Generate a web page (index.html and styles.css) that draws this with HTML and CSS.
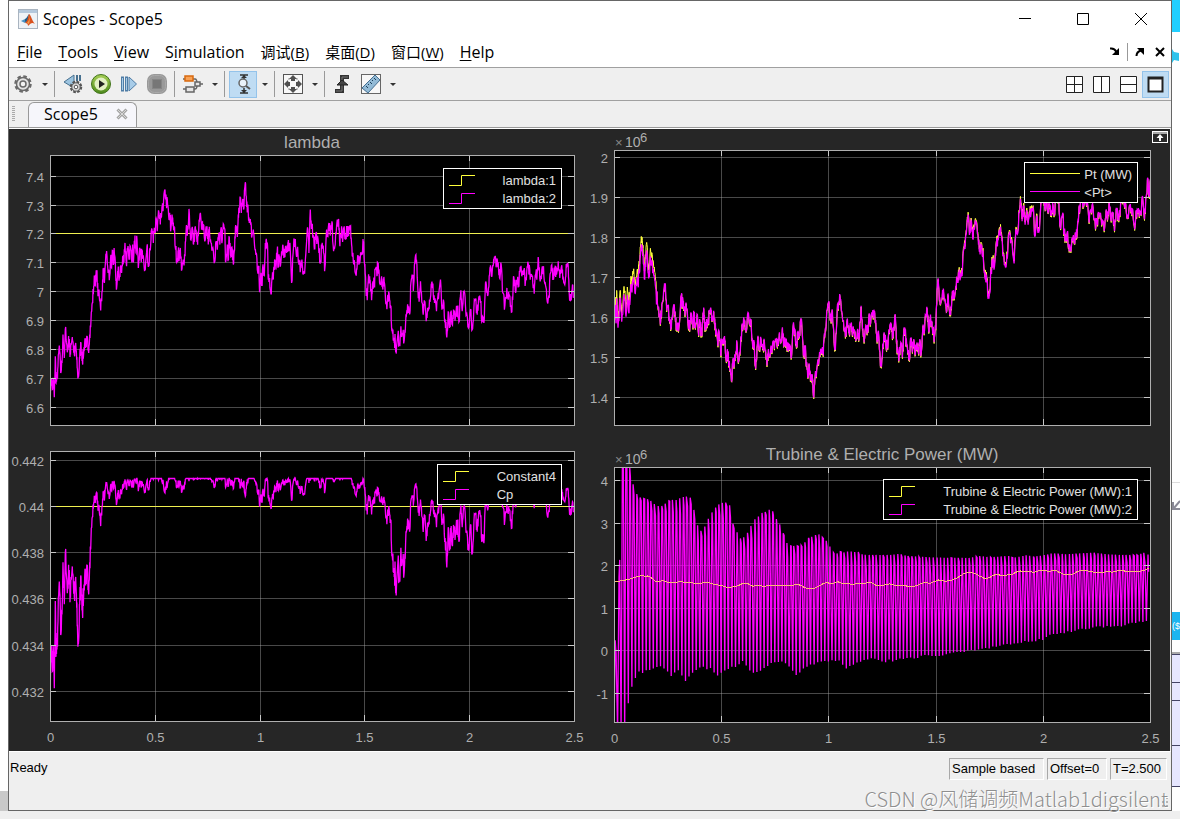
FILE: index.html
```html
<!DOCTYPE html>
<html lang="zh-CN">
<head>
	<meta charset="UTF-8">
	<title>Scopes - Scope5</title>
	<link rel="stylesheet" href="styles.css">
</head>
<body>
	<div class="desktop">
		<div class="behind_left"></div>
		<div class="window">
			<div class="titlebar">
				<svg class="logo" width="20" height="20" viewBox="0 0 20 20">
					<rect x="0.5" y="0.5" width="19" height="19" fill="#eef2f6" stroke="#a9b4c0"/>
					<rect x="1" y="1" width="18" height="3" fill="#b4c8dc"/>
					<path d="M3 12l4-2 2 2-2 2z" fill="#4a93c4"/>
					<path d="M7 10c2-1 3-4 4-5l-1 6-2 3-1-2z" fill="#225a86"/>
					<path d="M11 5c2 1 3 7 6 10-3-2-4-1-7 2 0-2-1-3-3-3 3-2 3-7 4-9z" fill="#d9521f"/>
					<path d="M11 6c1 3 0 6-2 8l2 1c1-3 1-6 0-9z" fill="#f3a04a"/>
				</svg>
				<h1>Scopes - Scope5</h1>
				<div class="win_btns">
					<button aria-label="Minimize"><svg width="12" height="12" viewBox="0 0 12 12"><path d="M0 5.5h12"/></svg></button>
					<button aria-label="Maximize"><svg width="12" height="12" viewBox="0 0 12 12"><path d="M.5 .5h11v11h-11z"/></svg></button>
					<button aria-label="Close"><svg width="12" height="12" viewBox="0 0 12 12"><path d="M0 0l12 12M12 0L0 12"/></svg></button>
				</div>
			</div>
			<div class="menubar">
				<button><u>F</u>ile</button>
				<button><u>T</u>ools</button>
				<button><u>V</u>iew</button>
				<button>S<u>i</u>mulation</button>
				<button class="zh">调试(<u>B</u>)</button>
				<button class="zh">桌面(<u>D</u>)</button>
				<button class="zh">窗口(<u>W</u>)</button>
				<button><u>H</u>elp</button>
				<div class="dock">
					<button aria-label="Dock"><svg width="10" height="10" viewBox="0 0 10 10"><path d="M0 1.5c3-.5 5 .5 6.500 3.500" fill="none" stroke="#000" stroke-width="2"/><path d="M9 1v7H2z"/></svg></button>
					<span class="dock_line"></span>
					<button aria-label="Undock"><svg width="10" height="10" viewBox="0 0 10 10"><path d="M1.500 9c0-3 1-4.500 4.500-5.500" fill="none" stroke="#000" stroke-width="2"/><path d="M2 1h7v7z"/></svg></button>
					<button aria-label="Close document"><svg width="10" height="10" viewBox="0 0 10 10"><path d="M1 1l8 8M9 1L1 9" stroke="#000" stroke-width="2"/></svg></button>
				</div>
			</div>
			<div class="toolbar">
				<button class="tool" aria-label="Configuration">
					<svg width="20" height="20" viewBox="0 0 20 20"><circle cx="10" cy="10" r="7.500" fill="none" stroke="#6a6a6a" stroke-width="2.500" stroke-dasharray="3.500 2.400"/><circle cx="10" cy="10" r="6.500" fill="#e4e4e4" stroke="#6a6a6a" stroke-width="1.500"/><circle cx="10" cy="10" r="3" fill="#f4f4f4" stroke="#6a6a6a" stroke-width="1.500"/></svg>
				</button>
				<button class="arrow" aria-label="More configuration"></button>
				<span class="sep"></span>
				<button class="tool" aria-label="Step back">
					<svg width="20" height="20" viewBox="0 0 20 20"><path d="M1 8l10-7v13z" fill="#9cc4e0" stroke="#47708f"/><path d="M14 1v6M17 1v6" stroke="#47708f" stroke-width="2"/><circle cx="13" cy="13" r="5" fill="none" stroke="#555" stroke-width="2.500" stroke-dasharray="2.600 1.300"/><circle cx="13" cy="13" r="4.200" fill="#ddd" stroke="#555"/><circle cx="13" cy="13" r="1.800" fill="#fff" stroke="#555"/></svg>
				</button>
				<button class="tool" aria-label="Run">
					<svg width="22" height="22" viewBox="0 0 22 22"><defs><linearGradient id="run" x2="0" y2="1"><stop stop-color="#a7cf55"/><stop offset="1" stop-color="#4d8a1c"/></linearGradient></defs><circle cx="11" cy="11" r="9.500" fill="url(#run)" stroke="#41741b"/><circle cx="11" cy="11" r="6.500" fill="#e3f0c4"/><path d="M9 7l6 4-6 4z" fill="#222"/></svg>
				</button>
				<button class="tool" aria-label="Step forward">
					<svg width="18" height="18" viewBox="0 0 18 18"><rect x="1.500" y="2" width="2" height="14" fill="#a8cce8" stroke="#4f7da6"/><rect x="5.500" y="2" width="2" height="14" fill="#a8cce8" stroke="#4f7da6"/><path d="M9 2l7.500 7L9 16z" fill="#a8cce8" stroke="#4f7da6"/></svg>
				</button>
				<button class="tool" aria-label="Stop">
					<svg width="20" height="20" viewBox="0 0 20 20"><rect width="20" height="20" rx="7" fill="#999"/><rect x="1.500" y="1.500" width="17" height="17" rx="6" fill="none" stroke="#a9a9a9"/><rect x="5.500" y="5.500" width="9" height="9" fill="#777" stroke="#868686"/></svg>
				</button>
				<span class="sep"></span>
				<button class="tool" aria-label="Highlight block">
					<svg width="22" height="20" viewBox="0 0 22 20"><path d="M1 5h3M11 5h2q2 0 2 5M1 15h3M11 15h2q2 0 2-4M17 10h4" fill="none" stroke="#666" stroke-width="1.500"/><rect x="3" y="2" width="8" height="5" fill="#f9a255" stroke="#d8690f" stroke-width="1.500"/><rect x="4" y="13" width="8" height="5" fill="#e6e6e6" stroke="#666" stroke-width="1.500"/><rect x="13" y="8" width="5" height="4" fill="#e6e6e6" stroke="#666" stroke-width="1.500"/></svg>
				</button>
				<button class="arrow" aria-label="More highlight"></button>
				<span class="sep"></span>
				<button class="tool active" aria-label="Zoom Y">
					<svg width="20" height="20" viewBox="0 0 20 20"><path d="M7 1h8M7 19h8M11 1v5M11 14v5" stroke="#333" stroke-width="1.500"/><path d="M8 4l3-3 3 3zM8 16l3 3 3-3z" fill="#333"/><circle cx="10" cy="9" r="4" fill="#e9f2fa" stroke="#666" stroke-width="1.500"/><path d="M13 12l4 3" stroke="#555" stroke-width="2"/></svg>
				</button>
				<button class="arrow" aria-label="More zoom"></button>
				<span class="sep"></span>
				<button class="tool" aria-label="Scale axes">
					<svg width="20" height="20" viewBox="0 0 20 20"><rect x=".5" y=".5" width="19" height="19" fill="#f8f8f8" stroke="#555"/><rect x="5" y="5" width="10" height="10" fill="none" stroke="#999" stroke-dasharray="2 2"/><path d="M10 1l4 4h-2v2H8V5H6zM10 19l4-4h-2v-2H8v2H6zM1 10l4-4v2h2v4H5v2zM19 10l-4-4v2h-2v4h2v2z" fill="#505050"/></svg>
				</button>
				<button class="arrow" aria-label="More scaling"></button>
				<span class="sep"></span>
				<button class="tool" aria-label="Triggers">
					<svg width="20" height="20" viewBox="0 0 20 20"><path d="M2 17h7V3h7" fill="none" stroke="#333" stroke-width="4"/><path d="M3 17h6V3h6" fill="none" stroke="#777"/><path d="M4 11l5-5 6 5z" fill="#444" stroke="#222"/></svg>
				</button>
				<button class="tool" aria-label="Cursor measurements">
					<svg width="20" height="20" viewBox="0 0 20 20"><rect x=".5" y=".5" width="19" height="19" fill="#f7f7f7" stroke="#666"/><path d="M1 14L14 1l5 5L7 19z" fill="#92bad6" stroke="#456f91"/><path d="M5 12l2 2M7 10l1 1M9 8l2 2M11 6l1 1M13 4l2 2" stroke="#1d425e"/></svg>
				</button>
				<button class="arrow" aria-label="More measurements"></button>
				<div class="layouts">
					<button class="tool" aria-label="Grid layout"><svg width="17" height="17" viewBox="0 0 17 17"><path d="M.5 .5h16v16H.5zM8.500 0v17M0 8.500h17"/></svg></button>
					<button class="tool" aria-label="Two columns"><svg width="17" height="17" viewBox="0 0 17 17"><path d="M.5 .5h16v16H.5zM8.500 0v17"/></svg></button>
					<button class="tool" aria-label="Two rows"><svg width="17" height="17" viewBox="0 0 17 17"><path d="M.5 .5h16v16H.5zM0 8.500h17"/></svg></button>
					<button class="tool active" aria-label="Single"><svg width="17" height="17" viewBox="0 0 17 17"><path d="M1.500 1.500h14v14h-14zM1 2.500h15"/></svg></button>
				</div>
			</div>
			<div class="tabs">
				<span class="grip"></span>
				<div class="tab">
					<span>Scope5</span>
					<button aria-label="Close tab"><svg width="12" height="12" viewBox="0 0 12 12"><path d="M1.500 1.500l9 9M10.500 1.500l-9 9" stroke="#a3a3a3" stroke-width="3"/><path d="M2 2l8 8M10 2l-8 8" stroke="#d6d6d6"/></svg></button>
				</div>
			</div>
			<div class="scope">
				<button class="expand" aria-label="Expand toolbar"><svg width="16" height="12" viewBox="0 0 16 12"><rect x=".5" y=".5" width="15" height="11" fill="#2a2a2a" stroke="#fff"/><path d="M1 2h14" stroke="#aaa" stroke-width="2"/><path d="M4.500 7L8 3l3.500 4H9v3H7V7z" fill="#fff"/></svg></button>
				<div class="column column_left">
					<h2>lambda</h2>
					<div class="plot">
						<svg id="lambda"></svg>
						<ul class="legend">
							<li><svg class="key yellow"><path d="M0 13.500h12.500v-10H26"/></svg>lambda:1</li>
							<li><svg class="key magenta"><path d="M0 13.500h12.500v-10H26"/></svg>lambda:2</li>
						</ul>
					</div>
					<h2></h2>
					<div class="plot">
						<svg id="cp"></svg>
						<ul class="legend">
							<li><svg class="key yellow"><path d="M0 13.500h12.500v-10H26"/></svg>Constant4</li>
							<li><svg class="key magenta"><path d="M0 13.500h12.500v-10H26"/></svg>Cp</li>
						</ul>
					</div>
				</div>
				<div class="column column_right">
					<h2></h2>
					<div class="plot">
						<svg id="pt"></svg>
						<ul class="legend">
							<li><svg class="key yellow"><path d="M0 7.500h50"/></svg>Pt (MW)</li>
							<li><svg class="key magenta"><path d="M0 7.500h50"/></svg>&lt;Pt&gt;</li>
						</ul>
					</div>
					<h2>Trubine &amp; Electric Power (MW)</h2>
					<div class="plot">
						<svg id="power"></svg>
						<ul class="legend">
							<li><svg class="key yellow"><path d="M0 13.500h12.500v-10H26"/></svg>Trubine &amp; Electric Power (MW):1</li>
							<li><svg class="key magenta"><path d="M0 13.500h12.500v-10H26"/></svg>Trubine &amp; Electric Power (MW):2</li>
						</ul>
					</div>
				</div>
			</div>
			<div class="status">
				<span class="ready">Ready</span>
				<span class="field field_mode">Sample based</span>
				<span class="field field_offset">Offset=0</span>
				<span class="field field_time">T=2.500</span>
			</div>
			<svg class="resize" width="12" height="12" viewBox="0 0 12 12"><path d="M9 1h2v2H9zM5 5h2v2H5zM9 5h2v2H9zM1 9h2v2H1zM5 9h2v2H5zM9 9h2v2H9z" fill="#b5b5b5"/></svg>
		</div>
		<div class="behind_right">
			<div class="cyan_top"></div>
			<svg class="cyan_bit" width="8" height="16" viewBox="0 0 8 16"><path d="M0 0l2 3 5 1v8l-5-1-2 3z" fill="#2fc3ec"/></svg>
			<svg class="arrow_bit" width="8" height="30" viewBox="0 0 8 30"><path d="M0 .5h8" stroke="#ddd"/><path d="M8 19l-6 7M1 20v7h7" fill="none" stroke="#8a8a96" stroke-width="2"/></svg>
			<div class="cyan_tag">($</div>
			<div class="rows"><i></i><i></i><i></i><i></i></div>
		</div>
	</div>
	<div class="watermark">CSDN @风储调频Matlab1digsilent</div>
	<script src="scope.js"></script>
</body>
</html>
```

FILE: styles.css
```css
body,h1,h2,ul,li{margin:0;padding:0}
ul{list-style-type: none;}
*{
	box-sizing: border-box;
}
body{
	position: relative;
	height: 100vh;
	padding-bottom: 8px;
	overflow: hidden;
	background-color: #efefef;
	color: #000;
	font-family: "Liberation Sans", Arial, "Noto Sans CJK SC", sans-serif;
	font-size: 13px;
}
button{
	display: flex;
	align-items: center;
	justify-content: center;
	margin: 0;
	padding: 0;
	border: 0;
	background: none;
	color: inherit;
	font: inherit;
}
svg{
	display: block;
	flex: none;
}

.desktop{
	display: flex;
	height: 100%;
}
.behind_left{
	width: 8px;
	background: linear-gradient(#fff, #fff) no-repeat 0 0 / 100% calc(100% - 20px) #c9c9c9;
}
.window{
	position: relative;
	flex: 1;
	min-width: 0;
	display: flex;
	flex-direction: column;
	border: 1px solid #666;
	background-color: #efefef;
}

/* title and menu */
.titlebar{
	display: flex;
	align-items: center;
	height: 36px;
	padding: 0 1px 0 9px;
	background-color: #fff;
}
.titlebar h1{
	margin-left: 5px;
	font: 16px/20px "Open Sans", "Noto Sans CJK SC", sans-serif;
}
.win_btns{
	display: flex;
	margin-left: auto;
}
.win_btns button{
	width: 58px;
	height: 36px;
}
.win_btns svg{
	fill: none;
	stroke: #000;
}
.menubar{
	display: flex;
	align-items: center;
	gap: 16px;
	height: 31px;
	padding: 0 6px 1px 8px;
	border-bottom: 1px solid #a0a0a0;
	background-color: #fff;
	font: 16px/20px "Open Sans", "Noto Sans CJK SC", sans-serif;
}
.menubar .zh{
	font-size: 15px;
}
.menubar u{
	text-underline-offset: 2px;
}
.dock{
	display: flex;
	align-items: center;
	gap: 7px;
	margin-left: auto;
}
.dock_line{
	width: 1px;
	height: 18px;
	background-color: #999;
}
.dock button:last-child{
	margin-left: 3px;
}

/* toolbar */
.toolbar{
	display: flex;
	align-items: center;
	height: 33px;
	border-bottom: 1px solid #a0a0a0;
}
.tool{
	width: 28px;
	height: 27px;
}
.arrow{
	width: 14px;
	height: 27px;
}
.arrow::after{
	content: "";
	margin-left: 2px;
	border: 3px solid transparent;
	border-top-color: #333;
	border-bottom: 0;
}
.sep{
	width: 1px;
	height: 26px;
	margin: 0 4px 0 3px;
	background-color: #999;
}
.active{
	border: 1px solid #94c3ea;
	background-color: #bfdcf3;
}
.layouts{
	display: flex;
	margin: 0 2px 0 auto;
}
.layouts .tool{
	width: 27px;
}
.layouts svg{
	fill: #fff;
	stroke: #222;
	stroke-width: 1;
}
.layouts .active svg{
	stroke-width: 2;
}

/* document tab */
.tabs{
	display: flex;
	align-items: flex-end;
	height: 27px;
	border-bottom: 1px solid #999;
}
.grip{
	width: 3px;
	height: 16px;
	margin: 0 12px 5px 3px;
	background: repeating-linear-gradient(#aaa 0 1px, #efefef 1px 2px);
}
.tab{
	display: flex;
	align-items: center;
	justify-content: space-between;
	width: 109px;
	height: 25px;
	margin: 0 0 0 1px;
	padding: 0 8px 2px 15px;
	border: 1px solid #999;
	border-bottom: 0;
	border-radius: 6px 6px 0 0;
	background-color: #f6f6fb;
	font: 16px/20px "Open Sans", sans-serif;
}

/* scope canvas */
.scope{
	position: relative;
	flex: 1;
	min-height: 0;
	display: grid;
	grid-template-columns: 524fr 536fr;
	column-gap: 40px;
	margin-right: 1px;
	padding: 0 20px 0 41px;
	background-color: #262626;
	border-top: 1px solid #fff;
}
.expand{
	position: absolute;
	top: 2px;
	right: 2px;
}
.column{
	display: flex;
	flex-direction: column;
	min-width: 0;
	min-height: 0;
	padding-bottom: 29px;
}
.column_left{
	padding-bottom: 31px;
}
.column h2{
	height: 26px;
	padding-top: 2px;
	color: #afafaf;
	font-size: 17px;
	font-weight: normal;
	line-height: 24px;
	text-align: center;
}
.column_right h2{
	height: 42px;
	padding-top: 18px;
}
.column_right h2:first-child{
	height: 21px;
}
.plot{
	position: relative;
	flex: 270 1 0;
	min-height: 0;
}
.column_right .plot{
	flex-grow: 275;
}
.column_right .plot:last-child{
	flex-grow: 255;
}
.plot > svg{
	position: absolute;
	width: 100%;
	height: 100%;
	overflow: visible;
}
.face{
	fill: #000;
}
.box{
	fill: none;
	stroke: #afafaf;
}
.grid{
	fill: none;
	stroke: rgba(175,175,175,0.42);
}
.ticks{
	fill: none;
	stroke: #c8c8c8;
}
.plot text{
	fill: #afafaf;
	font-size: 13px;
}
.plot .times{
	fill: #888;
}
.plot .power_of{
	font-size: 14px;
}
.line{
	fill: none;
	stroke-width: 1;
}
.yellow{
	stroke: #ffff3c;
}
.magenta{
	stroke: #ff00ff;
}
.constant{
	stroke: #f0f050;
}
.mean{
	stroke: #ffb478;
}
.line.magenta{
	stroke-width: 1.3;
}
.legend{
	position: absolute;
	top: 12px;
	right: 12px;
	padding: 3px 5px 0 5px;
	border: 1px solid #fff;
	background-color: #000;
	color: #e0e0e0;
	line-height: 18px;
}
.column_left .legend{
	top: 13px;
}
.legend li{
	display: flex;
	gap: 4px;
	white-space: nowrap;
}
.key{
	width: 50px;
	height: 18px;
	fill: none;
}

/* status bar */
.status{
	display: flex;
	gap: 3px;
	height: 59px;
	padding: 6px 4px 0 1px;
	border-top: 1px solid #fff;
	line-height: 20px;
}
.ready{
	margin-right: auto;
}
.field{
	height: 22px;
	padding: 0 2px;
	border: 1px solid #a8a8a8;
	border-right-color: #fff;
	border-bottom-color: #fff;
	white-space: nowrap;
}
.field_mode{
	width: 95px;
}
.field_offset{
	width: 60px;
}
.field_time{
	width: 57px;
}
.resize{
	position: absolute;
	right: 2px;
	bottom: 2px;
}

/* what shows behind the window on the right */
.behind_right{
	display: flex;
	flex-direction: column;
	width: 8px;
	overflow: hidden;
	background-color: #fff;
}
.cyan_top{
	height: 32px;
	background-color: #22cfff;
}
.cyan_bit{
	margin-top: 17px;
}
.arrow_bit{
	margin-top: auto;
}
.cyan_tag{
	height: 28px;
	margin: 100px 0 12px;
	background-color: #1cb5f0;
	color: #fff;
	font-size: 9px;
	line-height: 28px;
}
.rows{
	display: grid;
	grid-template-rows: 29px 18px 45px 41px;
	margin-bottom: 24px;
	border-top: 2px solid #aaa;
	background-color: #e6e6ff;
}
.rows i{
	border-bottom: 1px solid #444466;
}
.rows i:first-child{
	border-top: 1px solid #444466;
}
.watermark{
	position: absolute;
	right: 12px;
	bottom: 6px;
	color: #8f8f8f;
	font: 300 20px/28px "Noto Sans CJK SC", sans-serif;
	text-shadow: 1px 1px 0 #fff;
	white-space: nowrap;
}
```

FILE: scope.js
```js
var lambdaRaw = join([
	151,800,155,745,158,780,161,748,164,803,167,680,169,760,172,750,175,710,179,648,183,730,187,700,190,615,194,685,198,592,203,668,206,640,209,628,211,682,214,640,218,622,221,650,225,680,228,640,231,690,234,735,237,737,240,685,244,640,248,692,252,670,256,626,260,652,262,630,266,660,270,615,274,570,278,520,282,470,286,440,288,458,291,422,295,500,298,480,302,526,306,515,309,450,312,418,315,447,320,376,324,408,329,452,333,385,336,415,338,362,342,403,344,368,348,430,351,476,355,425,359,445,363,410,366,430,370,380,372,397,376,340,380,402,384,360,388,390,392,350,396,390,399,345,402,388,406,318,409,370,412,330,416,415,420,355,424,390,428,362,432,388,437,420,442,350,446,412,450,360,454,330,457,300,461,340,464,295,467,310,469,265,473,305,478,250,482,285,487,230,490,245,496,180,500,217,504,225,508,270,512,262,513,305,517,255,520,290,524,300,528,360,532,390,536,365,539,388,542,355,547,418,552,395,556,380,560,292,563,318,568,238,573,330,578,292,582,345,587,290,592,337,596,320,601,254,606,300,611,285,617,330,622,290,626,345,629,292,634,340,640,355,645,390,649,335,653,360,657,312,661,345,664,298,668,330,671,283,676,300,678,398,683,345,686,385,689,322,694,382,698,360,702,402,706,320,709,290,713,322,716,255,719,250,722,206,725,250,729,210,732,240,737,158,741,232,745,225,749,280,753,285,757,320,761,300,765,350,770,370,774,425,777,410,780,488,784,430,787,465,789,415,794,438,797,340,800,328,804,350,806,450,810,445,814,493,818,440,821,450,825,390,829,420,833,360,836,410,839,385,843,405,849,350,853,385,857,355,861,370,865,340,868,365,871,340,876,460,882,350,886,338,890,375,894,352,898,405
], 870, [
	33,412,37,390,41,425,45,432,50,350,55,300,58,370,62,240,67,290,72,320,75,355,78,312,83,325,88,370,93,392,98,340,102,370,106,415,111,300,115,320,118,280,122,318,127,275,132,365,137,345,142,280,147,268,151,350,156,290,160,325,164,290,168,330,172,295,177,320,182,290,186,345,190,370,195,400,200,438,204,380,208,405,213,370,218,375,221,335,225,405,229,480,233,512,236,455,240,440,243,485,247,492,250,455,254,465,258,415,262,440,264,398,268,420,272,465,276,440,280,480,283,442,287,490,291,525,295,500,300,512,304,530,306,595,310,600,314,640,317,630,320,672,325,615,330,645,334,590,338,610,344,632,348,580,353,548,357,530,361,550,364,460,369,445,372,468,377,385,381,395,385,480,390,500,393,455,398,520,402,540,405,520,410,575,415,545,420,510,425,465,430,462,435,520,441,545,445,500,449,480,453,450,457,540,463,520,468,595,473,605,476,545,480,595,484,550,488,585,492,540,498,560,504,535,508,577,514,482,518,545,523,490,528,530,533,560,537,595,543,540,548,600,553,535,558,510,563,555,568,500,573,520,578,575,583,580,588,460,593,485,598,470,602,420,606,440,611,410,616,382,621,405,626,398,630,445,635,405,640,490,646,528,652,475,656,510,661,500,667,547,672,440,677,480,682,460,687,465,692,412,697,440,703,425,708,455,713,410,717,402,722,450,726,435,730,460,734,492,738,440,743,430,747,392,752,455,757,420,762,410,767,460,772,505,778,500,783,430,788,425,792,450,796,420,801,435,806,395,811,445,816,410,820,450,826,465,830,405,835,400,839,490,844,512,849,465,852,505
]);
var ptRaw = join([
	43,560,46,500,49,555,51,480,55,568,61,480,66,550,73,468,79,535,83,470,88,525,93,450,97,462,102,415,107,465,112,425,115,440,118,395,120,400,123,340,127,320,131,375,135,422,139,350,143,350,147,420,151,370,156,366,160,390,164,410,168,450,173,520,178,560,183,575,188,520,193,480,196,462,201,545,205,530,210,580,214,597,218,560,223,525,227,575,232,605,238,590,244,500,248,520,251,515,255,545,259,520,263,555,270,605,275,555,279,585,283,560,287,598,292,555,296,610,300,570,304,622,309,580,312,535,316,605,321,570,325,585,329,550,333,535,337,575,342,545,346,600,350,605,354,643,358,605,363,675,367,632,372,645,375,635,379,690,383,660,387,712,391,720,395,755,399,710,404,700,408,680,412,645,417,695,422,660,426,600,431,580,435,572,440,605,445,550,450,580,454,570,459,655,463,635,467,710,471,690,475,620,479,660,484,630,489,660,494,638,498,665,502,710,506,660,512,675,518,650,524,660,528,630,533,655,539,610,543,640,548,595,553,650,557,630,562,665,567,645,571,650,575,685,580,590,585,600,590,655,594,610,598,625,603,580,606,580,611,680,616,655,620,710,624,745,629,715,632,755,637,735,641,800,646,740,651,720,655,690,661,680,666,665,670,670,672,640,676,610,680,570,685,520,690,550,694,580,698,545,703,640,707,662,712,550,717,520,721,505,725,545,730,575,735,600,739,620,743,570,748,610,754,590,758,620,763,600,768,635,773,605,777,635,784,530,788,600,793,640,797,600,802,615,807,570,813,580,818,560,823,545,827,580,832,640,836,605,842,712,848,680,853,610,858,640,863,650,868,600
], 840, [
	33,580,36,605,40,625,46,555,50,640,54,665,58,680,63,640,68,685,72,610,76,608,81,650,87,692,91,660,94,625,98,670,102,630,107,675,112,640,116,670,120,630,124,675,129,600,133,615,138,560,142,540,147,610,151,570,156,575,160,600,164,625,168,600,172,480,176,462,181,525,186,510,191,478,196,510,201,545,205,495,210,558,215,540,218,485,223,510,228,470,233,450,237,425,242,435,247,430,252,350,257,320,260,300,265,245,270,300,275,265,280,320,285,280,290,270,296,330,301,365,306,340,311,380,316,440,320,425,325,498,330,480,334,410,339,385,344,400,349,335,354,315,359,290,365,305,369,370,375,395,380,390,385,330,390,300,395,320,403,392,408,290,414,300,418,240,423,210,427,265,431,220,436,275,440,235,445,275,450,245,455,225,460,225,465,310,470,250,476,290,480,270,485,210,490,180,495,235,500,205,505,250,510,225,515,260,520,230,525,255,530,190,537,210,541,290,548,255,553,310,558,330,562,310,567,345,572,360,577,325,582,335,588,320,592,310,597,245,602,215,607,200,612,230,617,210,623,220,628,280,634,240,640,235,647,300,652,270,657,265,662,250,667,280,673,305,679,240,684,265,688,215,693,265,698,255,704,305,711,240,717,275,724,215,730,200,736,225,743,260,748,230,755,235,760,265,766,285,772,240,777,245,783,255,788,200,794,270,799,200,804,145,808,195,811,150
]);
// envelope of the electric power swing
var topRaw = join([
	43,590,50,610,58,400,60,230,66,60,86,60,93,98,103,145,115,170,130,175,145,178,158,185,170,198,190,198,200,188,213,178,225,182,240,175,255,170,268,170,278,178,287,240,298,268,307,275,320,250,330,225,342,210,352,195,363,192,375,185,385,192,395,200,400,250,405,263,415,285,425,300,437,287,450,270,460,240,472,235,482,220,500,215,513,205,523,222,535,252,545,255,555,300,567,318,600,318,612,312,622,295,633,292,643,288,653,282,663,285,675,300,685,306,695,335,710,342,717,333,730,338,750,333,762,338,772,333,782,342,800,345,870,345
], 840, [60,342,80,348,120,350,170,353,270,354,298,348,330,352,385,348,400,354,440,346,465,350,490,346,520,340,560,343,640,338,680,343,720,345,770,345,795,338,811,348]);
var bottomRaw = join([
	43,880,78,880,87,778,98,735,108,710,120,690,130,703,140,690,150,688,175,678,195,686,205,695,215,712,225,700,238,690,250,718,260,722,270,705,285,695,300,680,315,680,325,688,338,685,347,703,358,710,370,695,390,682,410,680,430,665,445,685,463,703,477,695,490,685,515,670,545,665,560,673,575,690,592,705,605,690,625,680,650,668,680,662,710,665,725,663,733,687,750,678,780,668,820,655,845,668,868,665
], 840, [10,668,20,655,45,665,70,655,100,655,130,648,170,650,200,642,240,635,300,628,350,620,400,610,450,605,490,597,510,582,550,580,600,568,660,560,715,560,760,550,811,542]);

function join(a, shift, b) {
	var out = a.slice();
	for (var i = 0; i < b.length; i += 2) {
		out.push(b[i] + shift, b[i + 1]);
	}
	return out;
}
// counts to [time, value]
function scale(raw, x0, perSecond, top, perUnit) {
	var out = [];
	for (var i = 0; i < raw.length; i += 2) {
		out.push([(raw[i] - x0) / perSecond, top - raw[i + 1] / perUnit]);
	}
	return out;
}
function at(points, t) {
	for (var i = 1; i < points.length; i++) {
		if (t <= points[i][0]) {
			var a = points[i - 1], b = points[i];
			return a[1] + (b[1] - a[1]) * (t - a[0]) / (b[0] - a[0]);
		}
	}
	return points[points.length - 1][1];
}
var seed = 7;
function random() {
	seed = (seed * 16807) % 2147483647;
	return seed / 2147483647 - 0.5;
}
// adds fine ripple between the recorded points
function ripple(points, amount) {
	var out = [];
	for (var i = 0; i < points.length - 1; i++) {
		var a = points[i], b = points[i + 1];
		out.push(a);
		for (var k = 1; k < 4; k++) {
			out.push([a[0] + (b[0] - a[0]) * k / 4, a[1] + (b[1] - a[1]) * k / 4 + random() * amount]);
		}
	}
	out.push(points[points.length - 1]);
	return out;
}

var lambda = ripple(scale(lambdaRaw, 151, 629, 7.561, 867), 0.05);
var cpCurve = [[6.6, 0.4315], [6.63, 0.432], [6.71, 0.4342], [6.784, 0.4361], [6.88, 0.4382], [6.95, 0.4394], [7, 0.44], [7.1, 0.4408], [7.15, 0.4411], [7.18, 0.4412], [7.27, 0.4412], [7.3, 0.441], [7.35, 0.4406], [7.4, 0.4403]];
var cp = lambda.map(function (p) {
	return [p[0], at(cpCurve, p[1])];
});
var pt = ripple(scale(ptRaw, 43, 643, 2.0683, 1200), 0.035);
var ptMeasured = pt.map(function (p) {
	var lag = p[0] < 0.2 ? 0.02 : p[0] > 1.6 && p[0] < 2 ? 0.006 : -0.003;
	return [p[0], p[1] - lag];
});
var top4 = scale(topRaw, 43, 643, 4.955, 127.6);
var bottom4 = scale(bottomRaw, 43, 643, 4.955, 127.6);
var mean = [];
var swing = [];
for (var t = 0; t <= 2.5; t += 0.012) {
	mean.push([t, (at(pt, t) + at(pt, t + 0.012) + at(pt, t + 0.024)) / 3]);
}
for (var n = 0; n < 150; n++) {
	var s = n / 60;
	swing.push([s, at(bottom4, s) + random() * 0.05]);
	swing.push([s + 0.006 + random() * 0.003, at(top4, s + 0.006)]);
	swing.push([s + 0.010, at(top4, s + 0.008) - 0.2 + random() * 0.4]);
}

function draw(id, opt) {
	var svg = document.getElementById(id);
	var w = svg.parentNode.clientWidth, h = svg.parentNode.clientHeight;
	var x = function (v) { return v / 2.5 * w; };
	var y = function (v) { return (opt.max - v) / (opt.max - opt.min) * h; };
	var grid = "", ticks = "", text = "";
	for (var i = 0; i <= 5; i++) {
		var gx = Math.round(x(i / 2)) + 0.5;
		if (i > 0 && i < 5) {
			grid += "M" + gx + " 0V" + h;
			ticks += "M" + gx + " 0v6M" + gx + " " + h + "v-6";
		}
		if (opt.xlabels) {
			text += '<text x="' + gx + '" y="' + (h + 21) + '" text-anchor="middle">' + i / 2 + '</text>';
		}
	}
	opt.labels.forEach(function (v) {
		var gy = Math.floor(y(v)) + 0.5;
		grid += "M0 " + gy + "H" + w;
		ticks += "M0 " + gy + "h6M" + w + " " + gy + "h-6";
		text += '<text x="-6" y="' + (gy + 5.5) + '" text-anchor="end">' + v + '</text>';
	});
	if (opt.exponent) {
		text += '<text x="1" y="-3" class="times">×</text><text x="11" y="-3" class="power_of">10</text><text x="26" y="-8">6</text>';
	}
	var lines = opt.lines.map(function (line) {
		var d = line.points.map(function (p) {
			return x(p[0]).toFixed(1) + " " + y(p[1]).toFixed(1);
		});
		return '<path class="line ' + line.color + '" d="M' + d.join("L") + '"' + (line.crisp ? ' shape-rendering="crispEdges"' : '') + '/>';
	}).join("");
	svg.innerHTML = '<clipPath id="clip_' + id + '"><rect width="' + (w + 1) + '" height="' + h + '"/></clipPath>' +
		'<rect class="face" width="' + w + '" height="' + h + '"/>' +
		'<path class="grid" d="' + grid + '"/>' +
		'<g clip-path="url(#clip_' + id + ')">' + lines + '</g>' +
		'<path class="ticks" d="' + ticks + '"/>' +
		'<rect class="box" x="0.5" y="0.5" width="' + w + '" height="' + h + '"/>' + text;
}
function drawAll() {
	draw("lambda", {
		min: 6.539, max: 7.473, labels: [6.6, 6.7, 6.8, 6.9, 7, 7.1, 7.2, 7.3, 7.4],
		lines: [
			{color: "constant", crisp: true, points: [[0, 7.2], [2.5, 7.2]]},
			{color: "magenta", points: lambda}
		]
	});
	draw("cp", {
		min: 0.43072, max: 0.44239, xlabels: true, labels: [0.432, 0.434, 0.436, 0.438, 0.44, 0.442],
		lines: [
			{color: "constant", crisp: true, points: [[0, 0.44], [2.5, 0.44]]},
			{color: "magenta", points: cp}
		]
	});
	draw("pt", {
		min: 1.331, max: 2.02, exponent: true, labels: [1.4, 1.5, 1.6, 1.7, 1.8, 1.9, 2],
		lines: [
			{color: "yellow", points: pt},
			{color: "magenta", points: ptMeasured}
		]
	});
	draw("power", {
		min: -1.68, max: 4.32, exponent: true, xlabels: true, labels: [-1, 0, 1, 2, 3, 4],
		lines: [
			{color: "magenta", points: swing},
			{color: "mean", crisp: true, points: mean}
		]
	});
}
drawAll();
window.onresize = drawAll;
```
